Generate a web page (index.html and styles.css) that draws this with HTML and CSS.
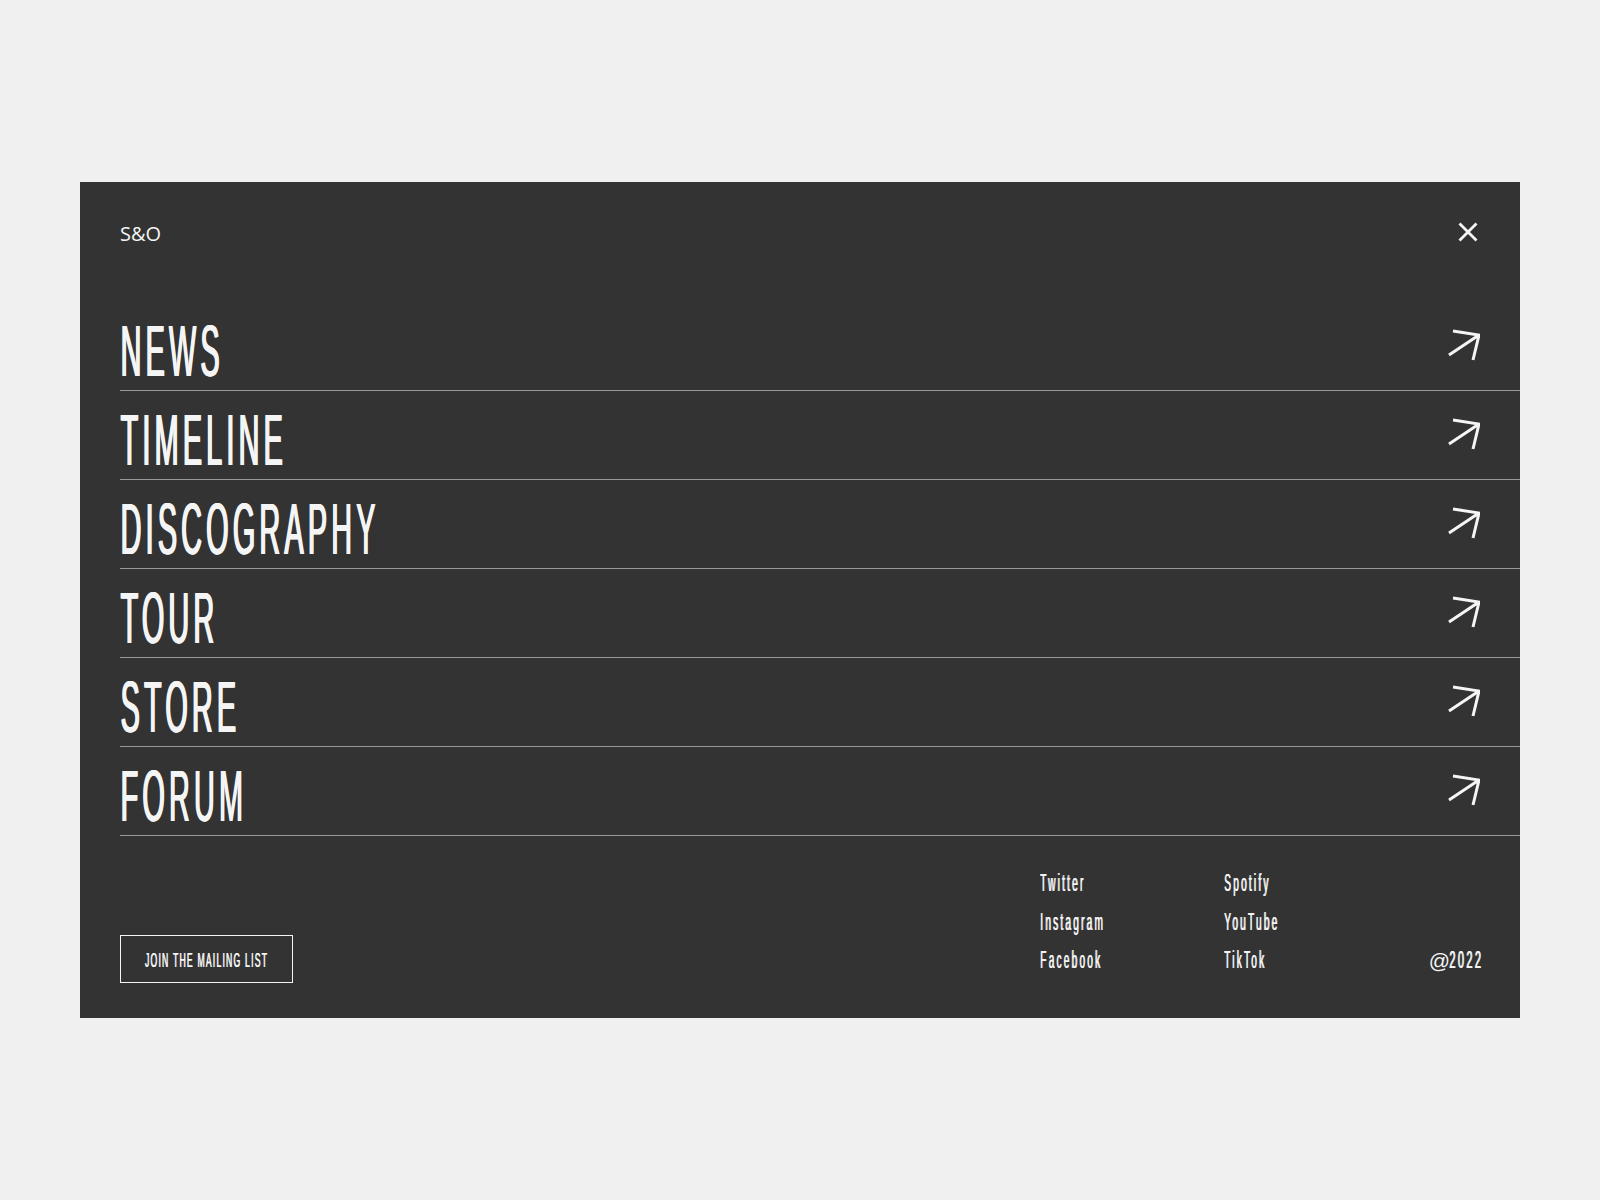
FILE: index.html
```html
<!DOCTYPE html>
<html lang="en">
<head>
<meta charset="utf-8">
<title>S&amp;O Menu</title>
<link rel="stylesheet" href="styles.css">
</head>
<body>
<div class="panel">
  <header class="header">
    <div class="logo">S&amp;O</div>
    <button class="close" aria-label="Close">
      <svg width="24" height="24" viewBox="0 0 24 24"><path d="M3.5 3.5 L20.5 20.5 M20.5 3.5 L3.5 20.5" stroke="#f5f5f5" stroke-width="2.8" fill="none"/></svg>
    </button>
  </header>
  <nav class="menu">
    <a class="row" href="#"><span class="label">NEWS</span><svg class="arrow" width="32" height="32" viewBox="0 0 32 32"><path d="M1 26 L31 6 M5 2 L31 6 L25 31" stroke="#f5f5f5" stroke-width="3" fill="none"/></svg></a>
    <a class="row" href="#"><span class="label">TIMELINE</span><svg class="arrow" width="32" height="32" viewBox="0 0 32 32"><path d="M1 26 L31 6 M5 2 L31 6 L25 31" stroke="#f5f5f5" stroke-width="3" fill="none"/></svg></a>
    <a class="row" href="#"><span class="label">DISCOGRAPHY</span><svg class="arrow" width="32" height="32" viewBox="0 0 32 32"><path d="M1 26 L31 6 M5 2 L31 6 L25 31" stroke="#f5f5f5" stroke-width="3" fill="none"/></svg></a>
    <a class="row" href="#"><span class="label">TOUR</span><svg class="arrow" width="32" height="32" viewBox="0 0 32 32"><path d="M1 26 L31 6 M5 2 L31 6 L25 31" stroke="#f5f5f5" stroke-width="3" fill="none"/></svg></a>
    <a class="row" href="#"><span class="label">STORE</span><svg class="arrow" width="32" height="32" viewBox="0 0 32 32"><path d="M1 26 L31 6 M5 2 L31 6 L25 31" stroke="#f5f5f5" stroke-width="3" fill="none"/></svg></a>
    <a class="row" href="#"><span class="label">FORUM</span><svg class="arrow" width="32" height="32" viewBox="0 0 32 32"><path d="M1 26 L31 6 M5 2 L31 6 L25 31" stroke="#f5f5f5" stroke-width="3" fill="none"/></svg></a>
  </nav>
  <footer class="footer">
    <div class="mailing"><span class="mailing-text">JOIN THE MAILING LIST</span></div>
    <a class="social c1 r1" href="#"><span>Twitter</span></a>
    <a class="social c1 r2" href="#"><span>Instagram</span></a>
    <a class="social c1 r3" href="#"><span>Facebook</span></a>
    <a class="social c2 r1" href="#"><span>Spotify</span></a>
    <a class="social c2 r2" href="#"><span>YouTube</span></a>
    <a class="social c2 r3" href="#"><span>TikTok</span></a>
    <div class="copy"><span class="at">@</span><span class="year">2022</span></div>
  </footer>
</div>
</body>
</html>
```
FILE: styles.css
```css
html, body {
  margin: 0;
  padding: 0;
}
body {
  background: #f0f0f0;
  min-height: 100vh;
  display: flex;
  align-items: center;
  justify-content: center;
  font-family: "Liberation Sans", Arial, sans-serif;
  color: #f5f5f5;
}
.panel {
  width: 1440px;
  background: #333333;
  padding: 38px 0 38.5px 40px;
  box-sizing: border-box;
}
.header {
  display: flex;
  justify-content: space-between;
  align-items: flex-start;
  padding-right: 40px;
  height: 26px;
}
.logo {
  font-family: "Open Sans", "Noto Sans", sans-serif;
  font-size: 20px;
  line-height: 24px;
  margin-top: 2px;
  color: #f5f5f5;
}
.close {
  background: none;
  border: 0;
  padding: 0;
  margin: 0;
  width: 24px;
  height: 24px;
  display: block;
  cursor: pointer;
}
.close svg { display: block; }
.menu {
  margin-top: 56px;
  display: flex;
  flex-direction: column;
}
.row {
  display: flex;
  justify-content: space-between;
  align-items: center;
  height: 88px;
  border-bottom: 1px solid #9a9a9a;
  padding-right: 40px;
  text-decoration: none;
  color: #f5f5f5;
  overflow: hidden;
}
.label {
  display: inline-block;
  font-size: 72px;
  font-weight: normal;
  line-height: 77px;
  padding-top: 11px;
  align-self: flex-start;
  transform: scaleX(0.4);
  transform-origin: left center;
  white-space: nowrap;
  letter-spacing: 10.5px;
  text-shadow: 1.5px 0 0 #f5f5f5, 3px 0 0 #f5f5f5;
}
.arrow {
  display: block;
  margin-bottom: 3px;
}
.footer {
  display: grid;
  grid-template-columns: 920px 184px 1fr auto;
  grid-template-rows: repeat(3, 38.5px);
  padding-top: 28px;
  padding-right: 40px;
}
.social {
  color: #f5f5f5;
  text-decoration: none;
  font-size: 23px;
  line-height: 38.5px;
  white-space: nowrap;
}
.social span {
  display: inline-block;
  transform: scaleX(0.44);
  transform-origin: left center;
  letter-spacing: 5px;
  text-shadow: 1.4px 0 0 #f5f5f5;
}
.c1 { grid-column: 2; }
.c2 { grid-column: 3; }
.r1 { grid-row: 1; }
.r2 { grid-row: 2; }
.r3 { grid-row: 3; }
.copy {
  grid-column: 4;
  grid-row: 3;
  line-height: 38.5px;
  white-space: nowrap;
  justify-self: end;
  display: flex;
  align-items: baseline;
}
.at {
  font-size: 21px;
  margin-right: -1px;
}
.year {
  display: inline-block;
  font-size: 23px;
  letter-spacing: 5px;
  width: 64px;
  transform: scaleX(0.48);
  transform-origin: left center;
  margin-right: -33px;
  text-shadow: 1.4px 0 0 #f5f5f5;
}
.mailing {
  grid-column: 1;
  grid-row: 1 / 4;
  align-self: end;
  justify-self: start;
  width: 173px;
  height: 48px;
  box-sizing: border-box;
  border: 1px solid #f5f5f5;
  display: flex;
  align-items: center;
  justify-content: center;
  margin-bottom: -3.5px;
  overflow: visible;
}
.mailing-text {
  display: inline-block;
  flex: none;
  font-size: 21px;
  line-height: 24px;
  letter-spacing: 3px;
  transform: scaleX(0.41);
  transform-origin: center center;
  white-space: nowrap;
  margin-top: 2px;
  text-shadow: 1.2px 0 0 #f5f5f5;
}
```
